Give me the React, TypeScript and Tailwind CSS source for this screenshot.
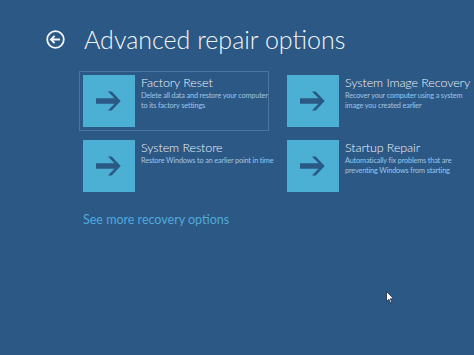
import React from 'react';

type Option = {
  title: string;
  lines: string[];
  focused?: boolean;
};

const options: Option[] = [
  {
    title: 'Factory Reset',
    lines: ['Delete all data and restore your computer', 'to its factory settings'],
    focused: true,
  },
  {
    title: 'System Image Recovery',
    lines: ['Recover your computer using a system', 'image you created earlier'],
  },
  {
    title: 'System Restore',
    lines: ['Restore Windows to an earlier point in time'],
  },
  {
    title: 'Startup Repair',
    lines: ['Automatically fix problems that are', 'preventing Windows from starting'],
  },
];

const ArrowTile: React.FC = () => (
  <div className="w-[52px] h-[52px] shrink-0 bg-[#4bb0d3] flex items-center justify-center">
    <svg width="28" height="24" viewBox="0 0 28 24">
      <path d="M1 9.2h18.5l-6.6-6.6 3.8-0.1 9 9.5-9 9.5-3.8-0.1 6.6-6.6H1z" fill="#2b5985" />
    </svg>
  </div>
);

const OptionCard: React.FC<{ option: Option }> = ({ option }) => (
  <div
    className={`w-[190px] h-[60px] p-[3px] flex gap-[6px] border ${
      option.focused ? 'border-[#4a75a2]' : 'border-transparent'
    }`}
  >
    <ArrowTile />
    <div className="flex-1 min-w-0">
      <div className="text-[12.5px] leading-[16px] font-light text-[#eef3f8] whitespace-nowrap tracking-[-0.1px]">
        {option.title}
      </div>
      {option.lines.map(line => (
        <div key={line} className="text-[7.3px] leading-[10px] text-[#9fc6e6] whitespace-nowrap tracking-[-0.15px]">
          {line}
        </div>
      ))}
    </div>
  </div>
);

export default function App() {
  return (
    <div
      className="relative w-[474px] h-[355px] overflow-hidden bg-[#2c5886]"
      style={{ fontFamily: 'Lato, "Open Sans", sans-serif' }}
    >
      <div className="pl-[46px] pt-[22px] flex items-center gap-[19px]">
        <svg width="19" height="19" viewBox="0 0 19 19">
          <circle cx="9.5" cy="9.5" r="8.3" fill="none" stroke="#f2f6fa" strokeWidth="1.8" />
          <path d="M5 9.5h9M8.6 5.9L5 9.5l3.6 3.6" fill="none" stroke="#f2f6fa" strokeWidth="2" />
        </svg>
        <h1 className="text-[25px] leading-[34px] font-light text-[#f2f6fa]">
          Advanced repair options
        </h1>
      </div>

      <div className="ml-[79px] mt-[15px] grid grid-cols-[190px_190px] gap-x-[14px] gap-y-[5px]">
        {options.map(o => (
          <OptionCard key={o.title} option={o} />
        ))}
      </div>

      <div className="ml-[83px] mt-[15px] text-[12.5px] leading-[18px] text-[#50aadb]">
        See more recovery options
      </div>

      <svg className="absolute left-[386px] top-[291px]" width="9" height="13" viewBox="0 0 9 13">
        <path d="M0.5 0.5v10l2.4-2.2 1.6 3.8 1.5-0.6-1.6-3.7h3.3z" fill="#ffffff" stroke="#1a2a40" strokeWidth="0.8" />
      </svg>
    </div>
  );
}
